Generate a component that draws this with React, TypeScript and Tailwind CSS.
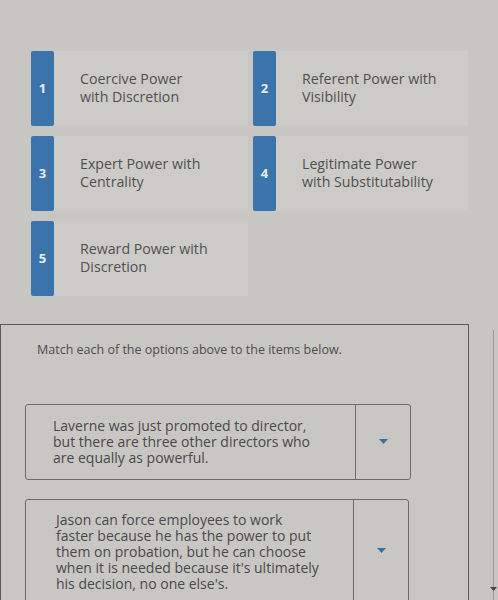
import { Fragment, useState } from "react";

type Option = {
  num: string;
  label: string[];
};

const options: Option[] = [
  { num: "1", label: ["Coercive Power", "with Discretion"] },
  { num: "2", label: ["Referent Power with", "Visibility"] },
  { num: "3", label: ["Expert Power with", "Centrality"] },
  { num: "4", label: ["Legitimate Power", "with Substitutability"] },
  { num: "5", label: ["Reward Power with", "Discretion"] },
];

const items: string[][] = [
  [
    "Laverne was just promoted to director,",
    "but there are three other directors who",
    "are equally as powerful.",
  ],
  [
    "Jason can force employees to work",
    "faster because he has the power to put",
    "them on probation, but he can choose",
    "when it is needed because it's ultimately",
    "his decision, no one else's.",
  ],
];

function Lines({ lines }: { lines: string[] }) {
  return (
    <>
      {lines.map((line, i) => (
        <Fragment key={line}>
          {i > 0 && <br />}
          {line}
        </Fragment>
      ))}
    </>
  );
}

function OptionCard({ option }: { option: Option }) {
  return (
    <div className="flex h-[75px] bg-[#cccbc8]">
      <div className="flex w-[23px] shrink-0 items-center justify-center rounded-[2px] bg-[#3b74aa] text-[13px] font-bold text-[#e6edf4]">
        {option.num}
      </div>
      <div className="flex items-center pb-[2px] pl-[26px]">
        <p className="text-[14.2px] leading-[18px] text-[#505050]">
          <Lines lines={option.label} />
        </p>
      </div>
    </div>
  );
}

function MatchRow({ lines, tall }: { lines: string[]; tall?: boolean }) {
  const [open, setOpen] = useState(false);
  return (
    <div
      className={`flex rounded-[3px] border border-[#6a6a6a] ${
        tall ? "h-[110px] w-[384px]" : "h-[76px] w-[386px]"
      }`}
    >
      <div
        className={`flex grow ${
          tall ? "items-start pl-[30px] pt-[12px]" : "items-center pl-[27px]"
        }`}
      >
        <p className="whitespace-nowrap text-[14px] leading-[16px] text-[#4a4a4a]">
          <Lines lines={lines} />
        </p>
      </div>
      <button
        onClick={() => setOpen(!open)}
        className={`flex w-[55px] shrink-0 justify-center border-l border-[#6a6a6a] ${
          tall ? "pt-[48px]" : "items-center"
        }`}
      >
        <svg width="9" height="6" viewBox="0 0 9 6">
          <path d="M0 0 L9 0 L4.5 5 Z" fill="#3b6fa3" />
        </svg>
      </button>
    </div>
  );
}

export default function App() {
  return (
    <div
      className="relative h-[600px] w-[498px] overflow-hidden bg-[#c7c6c3]"
      style={{ fontFamily: "'Open Sans', Lato, sans-serif" }}
    >
      <div className="grid w-[437px] grid-cols-[217px_215px] gap-x-[5px] gap-y-[10px] pl-[31px] pt-[51px]">
        {options.map((o) => (
          <OptionCard key={o.num} option={o} />
        ))}
      </div>

      <div className="mt-[28px] flex w-[469px] flex-col border border-[#5a5a5a] bg-[#c8c7c4] pb-[40px]">
        <p className="pl-[36px] pt-[16px] text-[12.5px] text-[#4d4d4d]">
          Match each of the options above to the items below.
        </p>
        <div className="flex flex-col gap-[19px] pl-[24px] pt-[44px]">
          <MatchRow lines={items[0]} />
          <MatchRow lines={items[1]} tall />
        </div>
      </div>

      <div className="absolute right-[4px] top-[330px] h-[270px] w-px bg-[#9a9996]" />
      <svg className="absolute bottom-[8px] right-[1px]" width="7" height="5" viewBox="0 0 7 5">
        <path d="M0 0 L7 0 L3.5 4 Z" fill="#444" />
      </svg>
    </div>
  );
}
